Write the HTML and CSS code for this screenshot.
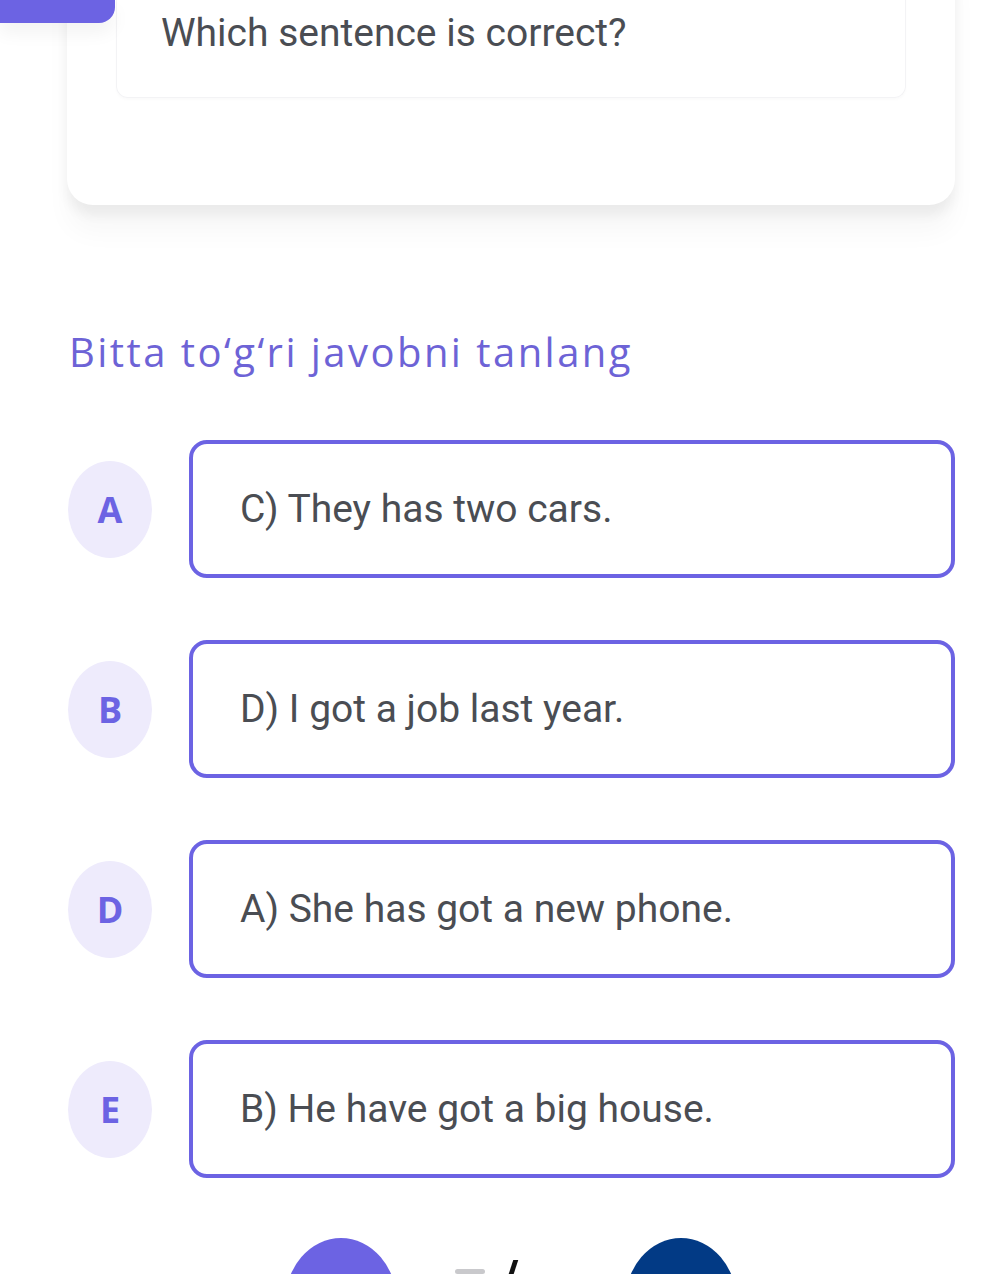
FILE: index.html
```html
<!DOCTYPE html>
<html lang="uz">
<head>
<meta charset="utf-8">
<title>Quiz</title>
<link rel="stylesheet" href="styles.css">
</head>
<body>
<div class="page">
  <div class="tab"></div>
  <section class="card">
    <div class="question">Which sentence is correct?</div>
  </section>

  <h2 class="prompt">Bitta to‘g‘ri javobni tanlang</h2>

  <ul class="options">
    <li class="option"><span class="badge">A</span><div class="answer">C) They has two cars.</div></li>
    <li class="option"><span class="badge">B</span><div class="answer">D) I got a job last year.</div></li>
    <li class="option"><span class="badge">D</span><div class="answer">A) She has got a new phone.</div></li>
    <li class="option"><span class="badge">E</span><div class="answer">B) He have got a big house.</div></li>
  </ul>

  <div class="nav">
    <span class="nav-btn prev"></span>
    <span class="counter"><span class="dash"></span><span class="slash"></span></span>
    <span class="nav-btn next"></span>
  </div>
</div>
</body>
</html>
```

FILE: styles.css
```css
* { box-sizing: border-box; }
html, body { margin: 0; padding: 0; background: #ffffff; }
body { font-family: Roboto, "Liberation Sans", sans-serif; overflow: hidden; }

.page {
  position: relative;
  width: 998px;
  height: 1274px;
  overflow: hidden;
}

.tab {
  position: absolute;
  left: 0;
  top: 0;
  width: 115px;
  height: 23px;
  background: #6c63e3;
  border-bottom-right-radius: 16px;
  box-shadow: 0 10px 18px rgba(0, 0, 0, 0.05);
  z-index: 2;
}

.card {
  margin: -60px 43px 0 67px;
  height: 265px;
  background: #ffffff;
  border-radius: 26px;
  padding: 0 49px;
  box-shadow: 0 10px 12px rgba(0, 0, 0, 0.055), 0 28px 26px rgba(0, 0, 0, 0.03);
}

.question {
  height: 158px;
  padding: 71px 0 0 44px;
  border: 1px solid #f3f3f5;
  border-top: none;
  border-radius: 0 0 12px 12px;
  box-shadow: 0 2px 3px rgba(0, 0, 0, 0.02);
  font-size: 39px;
  line-height: 44px;
  color: #4a4d53;
}

.prompt {
  margin: 120px 0 0 69px;
  font-family: "Open Sans", "Noto Sans", sans-serif;
  font-weight: 400;
  font-size: 40px;
  line-height: 54px;
  color: #6d63d6;
  letter-spacing: 2.45px;
}

.options {
  list-style: none;
  margin: 61px 0 0 0;
  padding: 0;
  display: flex;
  flex-direction: column;
  gap: 62px;
}

.option {
  display: flex;
  align-items: center;
  gap: 37px;
  padding-left: 68px;
}

.badge {
  flex: none;
  width: 84px;
  height: 97px;
  border-radius: 50%;
  background: #eeebfc;
  display: flex;
  align-items: center;
  justify-content: center;
  font-family: "Open Sans", Inter, sans-serif;
  font-weight: 700;
  font-size: 36px;
  color: #6c63e3;
}

.answer {
  width: 766px;
  height: 138px;
  border: 4px solid #6c63e3;
  border-radius: 18px;
  display: flex;
  align-items: center;
  padding-left: 47px;
  font-size: 39px;
  color: #4a4d53;
}

.nav {
  display: flex;
  align-items: flex-start;
  margin: 60px 0 0 285px;
  height: 60px;
}

.nav-btn {
  width: 112px;
  height: 130px;
  border-radius: 50%;
  flex: none;
}

.prev { background: #6c63e3; }
.next { background: #023a85; }

.counter {
  width: 228px;
  display: flex;
  justify-content: flex-start;
  align-items: flex-start;
  gap: 25px;
  padding: 22px 0 0 58px;
}

.dash {
  width: 30px;
  height: 5px;
  margin-top: 9px;
  border-radius: 3px;
  background: #c9c9cc;
}

.slash {
  width: 5px;
  height: 20px;
  background: #111111;
  transform: skewX(-18deg);
}
```
